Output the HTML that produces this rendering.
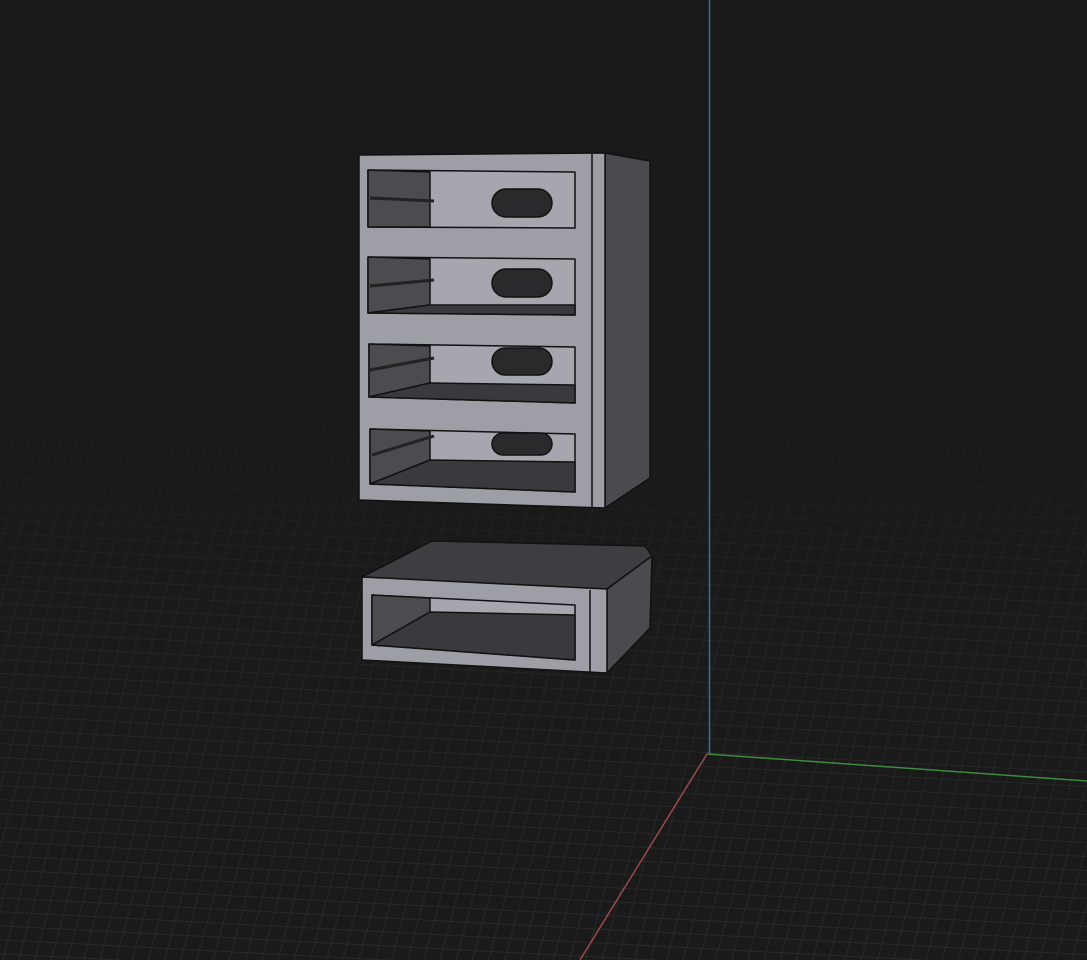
<!DOCTYPE html>
<html><head><meta charset="utf-8"><style>html,body{margin:0;padding:0;background:#1a1a1b;overflow:hidden;width:1087px;height:960px}svg{display:block}</style></head><body>
<svg width="1087" height="960" viewBox="0 0 1087 960" xmlns="http://www.w3.org/2000/svg">
<defs>
<pattern id="g" width="16" height="14" patternUnits="userSpaceOnUse" patternTransform="rotate(3) skewX(-12)">
<path d="M0 0.5 H16 M0.5 0 V14" stroke="#2a2a2c" stroke-width="1" fill="none"/>
</pattern>
<linearGradient id="fade" x1="0" y1="0" x2="0" y2="1">
<stop offset="0" stop-color="#fff" stop-opacity="0"/>
<stop offset="0.4" stop-color="#fff" stop-opacity="0.7"/>
<stop offset="1" stop-color="#fff" stop-opacity="1"/>
</linearGradient>
<mask id="m"><rect x="0" y="380" width="1087" height="580" fill="url(#fade)"/></mask>
</defs>
<rect width="1087" height="960" fill="#1a1a1b"/>
<rect x="0" y="380" width="1087" height="580" fill="url(#g)" mask="url(#m)"/>
<line x1="709.5" y1="0" x2="709.5" y2="754" stroke="#2d6fa8" stroke-width="1.5"/>
<line x1="707" y1="754" x2="1087" y2="781" stroke="#3e8a3e" stroke-width="1.5"/>
<line x1="707" y1="754" x2="580" y2="960" stroke="#9a4a4a" stroke-width="1.5"/>
<g stroke="#111" stroke-width="1.5" stroke-linejoin="round">
<polygon points="605,153 650,161 650,478 605,508" fill="#4a4a4f"/>
<polygon points="359,155 605,153 605,508 359,500" fill="#9e9fa6"/>
<line x1="592" y1="154" x2="592" y2="507"/>
<g>
<polygon points="368,170 575,172 575,228 368,227" fill="#a6a7ae"/>
<polygon points="368,170 430,172 430,227 368,227" fill="#4b4b50"/>
<rect x="492" y="189" width="60" height="28" rx="14" fill="#2a2a2c"/>
<line x1="370" y1="198" x2="434" y2="201" stroke="#222" stroke-width="3"/>
</g>
<g>
<polygon points="368,257 575,259 575,315 368,313" fill="#a6a7ae"/>
<polygon points="368,257 430,259 430,305 368,313" fill="#4b4b50"/>
<polygon points="368,313 430,305 575,305 575,315" fill="#3a3a3e"/>
<rect x="492" y="269" width="60" height="28" rx="14" fill="#2a2a2c"/>
<line x1="370" y1="286" x2="434" y2="280" stroke="#222" stroke-width="3"/>
</g>
<g>
<polygon points="369,344 575,347 575,403 369,397" fill="#a6a7ae"/>
<polygon points="369,344 430,346 430,383 369,397" fill="#4b4b50"/>
<polygon points="369,397 430,383 575,385 575,403" fill="#3a3a3e"/>
<rect x="492" y="348" width="60" height="27" rx="13.5" fill="#2a2a2c"/>
<line x1="370" y1="370" x2="434" y2="358" stroke="#222" stroke-width="3"/>
</g>
<g>
<polygon points="370,429 575,434 575,492 370,484" fill="#a6a7ae"/>
<polygon points="370,429 430,431 430,460 370,484" fill="#4b4b50"/>
<polygon points="370,484 430,460 575,462 575,492" fill="#3a3a3e"/>
<rect x="492" y="433" width="60" height="22" rx="11" fill="#2a2a2c"/>
<line x1="372" y1="455" x2="434" y2="436" stroke="#222" stroke-width="3"/>
</g>
<polygon points="362,577 432,541 645,546 652,556 607,589 590,590" fill="#3e3e42"/>
<polygon points="607,589 652,556 650,628 607,673" fill="#4a4a4f"/>
<polygon points="362,577 607,589 607,673 362,660" fill="#9e9fa6"/>
<line x1="590" y1="590" x2="590" y2="672"/>
<polygon points="372,595 575,605 575,660 372,645" fill="#a6a7ae"/>
<polygon points="372,595 430,598 430,612 372,645" fill="#4b4b50"/>
<polygon points="372,645 430,612 575,615 575,660" fill="#3a3a3e"/>
</g>
</svg>
</body></html>
